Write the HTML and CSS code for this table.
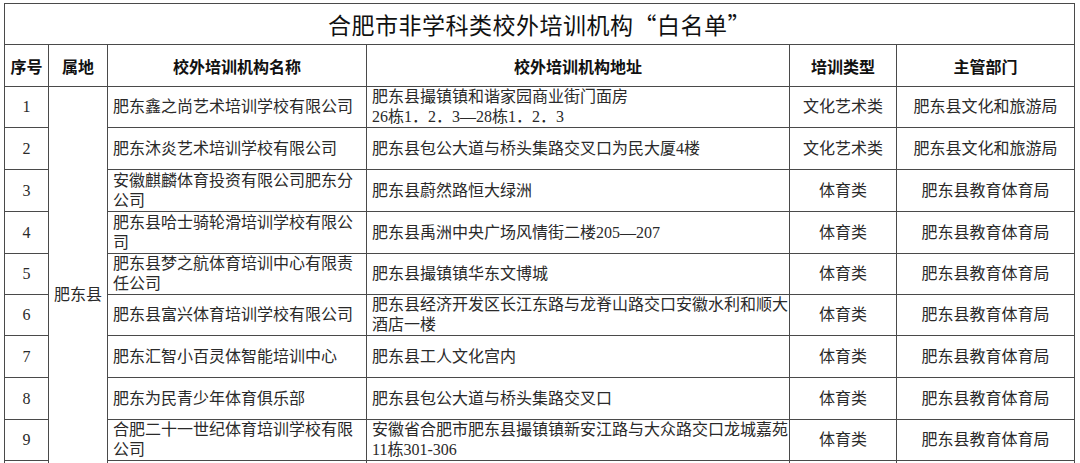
FILE: index.html
```html
<!DOCTYPE html>
<html lang="zh-CN">
<head>
<meta charset="utf-8">
<title>合肥市非学科类校外培训机构“白名单”</title>
<link rel="stylesheet" href="styles.css">
</head>
<body>
<div class="frame">
<table class="list">
  <colgroup>
    <col class="c-no"><col class="c-area"><col class="c-name"><col class="c-addr"><col class="c-type"><col class="c-dept">
  </colgroup>
  <tr class="r-title"><td colspan="6" class="title">合肥市非学科类校外培训机构“白名单”</td></tr>
  <tr class="r-head">
    <th>序号</th><th>属地</th><th>校外培训机构名称</th><th>校外培训机构地址</th><th>培训类型</th><th>主管部门</th>
  </tr>
  <tr class="r-41">
    <td class="no">1</td>
    <td class="area" rowspan="10">肥东县</td>
    <td class="txt">肥东鑫之尚艺术培训学校有限公司</td>
    <td class="txt">肥东县撮镇镇和谐家园商业街门面房<br>26栋1．2．3—28栋1．2．3</td>
    <td class="ctr">文化艺术类</td>
    <td class="ctr">肥东县文化和旅游局</td>
  </tr>
  <tr class="r-42">
    <td class="no">2</td>
    <td class="txt">肥东沐炎艺术培训学校有限公司</td>
    <td class="txt">肥东县包公大道与桥头集路交叉口为民大厦4楼</td>
    <td class="ctr">文化艺术类</td>
    <td class="ctr">肥东县文化和旅游局</td>
  </tr>
  <tr class="r-42">
    <td class="no">3</td>
    <td class="txt">安徽麒麟体育投资有限公司肥东分公司</td>
    <td class="txt">肥东县蔚然路恒大绿洲</td>
    <td class="ctr">体育类</td>
    <td class="ctr">肥东县教育体育局</td>
  </tr>
  <tr class="r-42">
    <td class="no">4</td>
    <td class="txt">肥东县哈士骑轮滑培训学校有限公司</td>
    <td class="txt">肥东县禹洲中央广场风情街二楼205—207</td>
    <td class="ctr">体育类</td>
    <td class="ctr">肥东县教育体育局</td>
  </tr>
  <tr class="r-41">
    <td class="no">5</td>
    <td class="txt">肥东县梦之航体育培训中心有限责任公司</td>
    <td class="txt">肥东县撮镇镇华东文博城</td>
    <td class="ctr">体育类</td>
    <td class="ctr">肥东县教育体育局</td>
  </tr>
  <tr class="r-41">
    <td class="no">6</td>
    <td class="txt">肥东县富兴体育培训学校有限公司</td>
    <td class="txt">肥东县经济开发区长江东路与龙脊山路交口安徽水利和顺大酒店一楼</td>
    <td class="ctr">体育类</td>
    <td class="ctr">肥东县教育体育局</td>
  </tr>
  <tr class="r-42">
    <td class="no">7</td>
    <td class="txt">肥东汇智小百灵体智能培训中心</td>
    <td class="txt">肥东县工人文化宫内</td>
    <td class="ctr">体育类</td>
    <td class="ctr">肥东县教育体育局</td>
  </tr>
  <tr class="r-42">
    <td class="no">8</td>
    <td class="txt">肥东为民青少年体育俱乐部</td>
    <td class="txt">肥东县包公大道与桥头集路交叉口</td>
    <td class="ctr">体育类</td>
    <td class="ctr">肥东县教育体育局</td>
  </tr>
  <tr class="r-41">
    <td class="no">9</td>
    <td class="txt">合肥二十一世纪体育培训学校有限公司</td>
    <td class="txt">安徽省合肥市肥东县撮镇镇新安江路与大众路交口龙城嘉苑11栋301-306</td>
    <td class="ctr">体育类</td>
    <td class="ctr">肥东县教育体育局</td>
  </tr>
  <tr class="r-42">
    <td class="no"></td>
    <td class="txt"></td>
    <td class="txt"></td>
    <td class="ctr"></td>
    <td class="ctr"></td>
  </tr>
</table>
</div>
</body>
</html>
```

FILE: styles.css
```css
html, body {
  margin: 0;
  padding: 0;
  background: #fff;
}
.frame {
  padding: 3px 0 0 4px;
  height: 463px;
  overflow: hidden;
  box-sizing: border-box;
  font-family: "Liberation Serif", "Noto Sans CJK SC", serif;
  color: #2a2a2a;
}
.list {
  border-collapse: collapse;
  table-layout: fixed;
  width: 1071px;
  font-size: 16px;
  line-height: 20px;
}
.c-no { width: 44px; }
.c-area { width: 59px; }
.c-name { width: 259px; }
.c-addr { width: 423px; }
.c-type { width: 107px; }
.c-dept { width: 178px; }

.list td, .list th {
  border: 1px solid #4a4a4a;
  padding: 0;
  vertical-align: middle;
  overflow: hidden;
}
.r-title { height: 41px; }
.r-head { height: 42px; }
.r-41 { height: 41px; }
.r-42 { height: 42px; }

.title {
  text-align: center;
  font-family: "Noto Sans CJK SC", sans-serif;
  font-size: 23px;
  letter-spacing: 0.5px;
  color: #111;
}
.list th {
  font-family: "Noto Sans CJK SC", sans-serif;
  font-weight: bold;
  font-size: 16px;
  color: #111;
  text-align: center;
}
.no {
  text-align: center;
}
.area {
  text-align: center;
}
.list .txt {
  text-align: left;
  padding-left: 5px;
}
.ctr {
  text-align: center;
}
```
